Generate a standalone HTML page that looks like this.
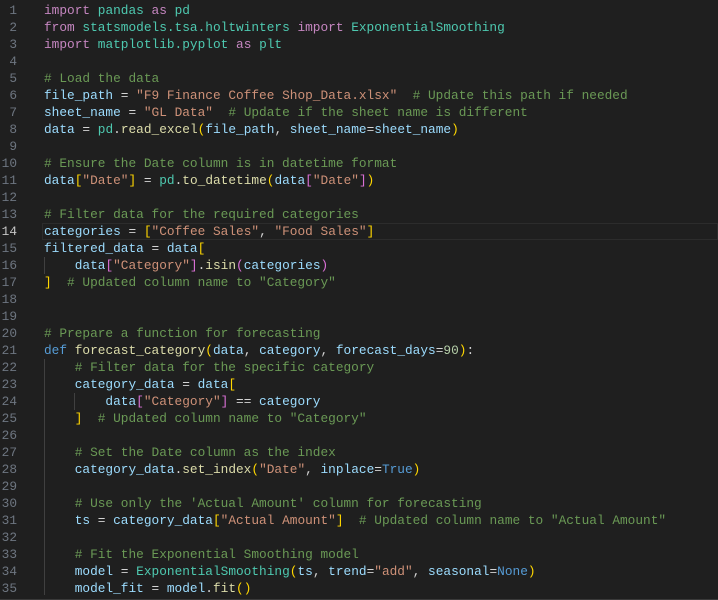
<!DOCTYPE html>
<html><head><meta charset="utf-8"><style>
html,body{margin:0;padding:0;background:#1f1f1f;width:718px;height:600px;overflow:hidden}
.ed{position:relative;width:718px;height:600px;font-family:"Liberation Mono",monospace;font-size:12.8px;}
.l{position:absolute;left:0;height:17px;line-height:17px;white-space:pre;width:718px}
.n{position:absolute;left:0;width:17px;text-align:right;color:#6e7681}
.c{position:absolute;left:44px;color:#9cdcfe}
.cur{position:absolute;left:42px;right:0;top:0;height:15px;border:1px solid #2c2c2c}
.g{position:absolute;width:1px;background:#404040}
.k{color:#c586c0}.m{color:#4ec9b0}.v{color:#9cdcfe}.s{color:#ce9178}.cm{color:#6a9955}
.f{color:#dcdcaa}.b1{color:#ffd700}.b2{color:#da70d6}.b3{color:#179fff}.d{color:#569cd6}.w{color:#d4d4d4}
</style></head><body><div class="ed">
<div class="g" style="left:44px;top:257px;height:17px"></div>
<div class="g" style="left:44px;top:359px;height:236px"></div>
<div class="g" style="left:74px;top:393px;height:17px"></div>
<div class="l" style="top:2px"><span class="n">1</span><span class="c"><span class="k">import</span> <span class="m">pandas</span> <span class="k">as</span> <span class="m">pd</span></span></div>
<div class="l" style="top:19px"><span class="n">2</span><span class="c"><span class="k">from</span> <span class="m">statsmodels.tsa.holtwinters</span> <span class="k">import</span> <span class="m">ExponentialSmoothing</span></span></div>
<div class="l" style="top:36px"><span class="n">3</span><span class="c"><span class="k">import</span> <span class="m">matplotlib.pyplot</span> <span class="k">as</span> <span class="m">plt</span></span></div>
<div class="l" style="top:53px"><span class="n">4</span></div>
<div class="l" style="top:70px"><span class="n">5</span><span class="c cm"># Load the data</span></div>
<div class="l" style="top:87px"><span class="n">6</span><span class="c">file_path <span class="w">=</span> <span class="s">"F9 Finance Coffee Shop_Data.xlsx"</span>  <span class="cm"># Update this path if needed</span></span></div>
<div class="l" style="top:104px"><span class="n">7</span><span class="c">sheet_name <span class="w">=</span> <span class="s">"GL Data"</span>  <span class="cm"># Update if the sheet name is different</span></span></div>
<div class="l" style="top:121px"><span class="n">8</span><span class="c">data <span class="w">=</span> <span class="m">pd</span><span class="w">.</span><span class="f">read_excel</span><span class="b1">(</span>file_path<span class="w">,</span> sheet_name<span class="w">=</span>sheet_name<span class="b1">)</span></span></div>
<div class="l" style="top:138px"><span class="n">9</span></div>
<div class="l" style="top:155px"><span class="n">10</span><span class="c cm"># Ensure the Date column is in datetime format</span></div>
<div class="l" style="top:172px"><span class="n">11</span><span class="c">data<span class="b1">[</span><span class="s">"Date"</span><span class="b1">]</span> <span class="w">=</span> <span class="m">pd</span><span class="w">.</span><span class="f">to_datetime</span><span class="b1">(</span>data<span class="b2">[</span><span class="s">"Date"</span><span class="b2">]</span><span class="b1">)</span></span></div>
<div class="l" style="top:189px"><span class="n">12</span></div>
<div class="l" style="top:206px"><span class="n">13</span><span class="c cm"># Filter data for the required categories</span></div>
<div class="l" style="top:223px"><div class="cur"></div><span class="n" style="color:#c6c6c6">14</span><span class="c">categories <span class="w">=</span> <span class="b1">[</span><span class="s">"Coffee Sales"</span><span class="w">,</span> <span class="s">"Food Sales"</span><span class="b1">]</span></span></div>
<div class="l" style="top:240px"><span class="n">15</span><span class="c">filtered_data <span class="w">=</span> data<span class="b1">[</span></span></div>
<div class="l" style="top:257px"><span class="n">16</span><span class="c">    data<span class="b2">[</span><span class="s">"Category"</span><span class="b2">]</span><span class="w">.</span><span class="f">isin</span><span class="b2">(</span>categories<span class="b2">)</span></span></div>
<div class="l" style="top:274px"><span class="n">17</span><span class="c"><span class="b1">]</span>  <span class="cm"># Updated column name to "Category"</span></span></div>
<div class="l" style="top:291px"><span class="n">18</span></div>
<div class="l" style="top:308px"><span class="n">19</span></div>
<div class="l" style="top:325px"><span class="n">20</span><span class="c cm"># Prepare a function for forecasting</span></div>
<div class="l" style="top:342px"><span class="n">21</span><span class="c"><span class="d">def</span> <span class="f">forecast_category</span><span class="b1">(</span>data<span class="w">,</span> category<span class="w">,</span> forecast_days<span class="w">=</span><span style="color:#b5cea8">90</span><span class="b1">)</span><span class="w">:</span></span></div>
<div class="l" style="top:359px"><span class="n">22</span><span class="c">    <span class="cm"># Filter data for the specific category</span></span></div>
<div class="l" style="top:376px"><span class="n">23</span><span class="c">    category_data <span class="w">=</span> data<span class="b1">[</span></span></div>
<div class="l" style="top:393px"><span class="n">24</span><span class="c">        data<span class="b2">[</span><span class="s">"Category"</span><span class="b2">]</span> <span class="w">==</span> category</span></div>
<div class="l" style="top:410px"><span class="n">25</span><span class="c">    <span class="b1">]</span>  <span class="cm"># Updated column name to "Category"</span></span></div>
<div class="l" style="top:427px"><span class="n">26</span></div>
<div class="l" style="top:444px"><span class="n">27</span><span class="c">    <span class="cm"># Set the Date column as the index</span></span></div>
<div class="l" style="top:461px"><span class="n">28</span><span class="c">    category_data<span class="w">.</span><span class="f">set_index</span><span class="b1">(</span><span class="s">"Date"</span><span class="w">,</span> inplace<span class="w">=</span><span class="d">True</span><span class="b1">)</span></span></div>
<div class="l" style="top:478px"><span class="n">29</span></div>
<div class="l" style="top:495px"><span class="n">30</span><span class="c">    <span class="cm"># Use only the 'Actual Amount' column for forecasting</span></span></div>
<div class="l" style="top:512px"><span class="n">31</span><span class="c">    ts <span class="w">=</span> category_data<span class="b1">[</span><span class="s">"Actual Amount"</span><span class="b1">]</span>  <span class="cm"># Updated column name to "Actual Amount"</span></span></div>
<div class="l" style="top:529px"><span class="n">32</span></div>
<div class="l" style="top:546px"><span class="n">33</span><span class="c">    <span class="cm"># Fit the Exponential Smoothing model</span></span></div>
<div class="l" style="top:563px"><span class="n">34</span><span class="c">    model <span class="w">=</span> <span class="m">ExponentialSmoothing</span><span class="b1">(</span>ts<span class="w">,</span> trend<span class="w">=</span><span class="s">"add"</span><span class="w">,</span> seasonal<span class="w">=</span><span class="d">None</span><span class="b1">)</span></span></div>
<div class="l" style="top:580px"><span class="n">35</span><span class="c">    model_fit <span class="w">=</span> model<span class="w">.</span><span class="f">fit</span><span class="b1">()</span></span></div>
<div style="position:absolute;left:0;right:0;bottom:0;height:1px;background:#3a3a3a"></div>
</div></body></html>
